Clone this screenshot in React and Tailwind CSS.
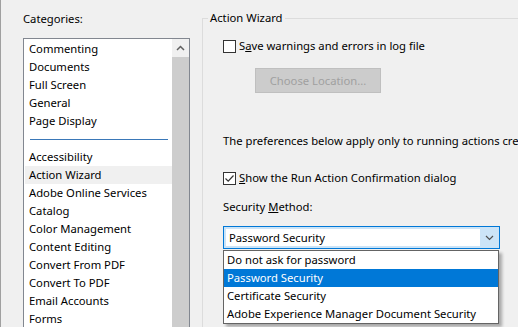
import React from "react";

const font = { fontFamily: '"Noto Sans", "Segoe UI", sans-serif' };

function Checkbox({ checked }) {
  return (
    <div className="w-[13px] h-[13px] border border-[#333333] bg-white flex items-center justify-center shrink-0">
      {checked && (
        <svg width="11" height="11" viewBox="0 0 11 11">
          <path d="M1.5 5.5 L4.2 8.2 L9.5 2.5" fill="none" stroke="#333333" strokeWidth="1.2" />
        </svg>
      )}
    </div>
  );
}

export default function App() {
  const top = ["Commenting", "Documents", "Full Screen", "General", "Page Display"];
  const rest = [
    "Accessibility",
    "Action Wizard",
    "Adobe Online Services",
    "Catalog",
    "Color Management",
    "Content Editing",
    "Convert From PDF",
    "Convert To PDF",
    "Email Accounts",
    "Forms",
  ];
  return (
    <div
      className="w-[518px] h-[327px] overflow-hidden bg-[#f0f0f0] flex text-[11.25px] leading-[18px] text-black border-l border-[#a0a0a0]"
      style={font}
    >
      {/* Left panel */}
      <div className="w-[201px] shrink-0 flex flex-col pl-[22px] pt-[10px]">
        <div className="h-[18px]">Categories:</div>
        <div className="mt-[10px] w-[167px] flex-1 border border-[#828790] bg-white flex">
          <div className="flex-1 pt-[1px] pl-[1px]">
            {top.map((t) => (
              <div key={t} className="h-[18px] pl-[4px]">{t}</div>
            ))}
            <div className="h-[18px] flex items-center pl-[5px] pr-[4px]">
              <div className="h-[1px] w-full bg-[#3a78b8]" />
            </div>
            {rest.map((t) => (
              <div
                key={t}
                className={`h-[18px] pl-[4px] ${t === "Action Wizard" ? "bg-[#f0f0f0]" : ""}`}
              >
                {t}
              </div>
            ))}
          </div>
          <div className="w-[17px] flex flex-col bg-[#f0f0f0]">
            <div className="h-[18px] flex items-center justify-center">
              <svg width="9" height="6" viewBox="0 0 9 6">
                <path d="M1 5 L4.5 1.5 L8 5" fill="none" stroke="#606060" strokeWidth="1.5" />
              </svg>
            </div>
            <div className="flex-1 bg-[#cdcdcd]" />
          </div>
        </div>
      </div>

      {/* Right panel */}
      <div className="flex-1 pt-[18px]">
        <div className="relative h-full border-l border-t border-[#dcdcdc] pl-[20px]">
          <div className="absolute left-[5px] top-[-10px] px-[2px] bg-[#f0f0f0] leading-[18px]">
            Action Wizard
          </div>
          <div className="pt-[18px] flex items-center gap-[3px]">
            <Checkbox />
            <span>
              S<span className="underline">a</span>ve warnings and errors in log file
            </span>
          </div>
          <div className="mt-[13px] ml-[32px] w-[126px] h-[25px] border border-[#bfbfbf] bg-[#cccccc] text-[#a0a0a0] flex items-center justify-center">
            Choose Location...
          </div>
          <div className="mt-[39px] whitespace-nowrap">
            The preferences below apply only to running actions created in Acrobat
          </div>
          <div className="mt-[19px] flex items-center gap-[3px]">
            <Checkbox checked />
            <span>
              <span className="underline">S</span>how the Run Action Confirmation dialog
            </span>
          </div>
          <div className="mt-[11px]">
            Security <span className="underline">M</span>ethod:
          </div>
          <div className="relative mt-[10px] w-[277px]">
            <div className="h-[23px] border border-[#0078d7] bg-[#cce4f7] flex">
              <div className="flex-1 bg-white my-[2px] ml-[2px] pl-[3px] flex items-center">
                Password Security
              </div>
              <div className="w-[19px] flex items-center justify-center">
                <svg width="9" height="6" viewBox="0 0 9 6">
                  <path d="M1 1 L4.5 4.5 L8 1" fill="none" stroke="#505050" strokeWidth="1.2" />
                </svg>
              </div>
            </div>
            <div className="absolute left-0 top-[24px] w-[276px] border border-[#646464] bg-white shadow-[3px_3px_3px_rgba(0,0,0,0.3)]">
              {["Do not ask for password", "Password Security", "Certificate Security", "Adobe Experience Manager Document Security"].map(
                (t) => (
                  <div
                    key={t}
                    className={`h-[18px] pl-[3px] whitespace-nowrap ${t === "Password Security" ? "bg-[#0078d7] text-white" : ""}`}
                  >
                    {t}
                  </div>
                )
              )}
            </div>
          </div>
        </div>
      </div>
    </div>
  );
}
